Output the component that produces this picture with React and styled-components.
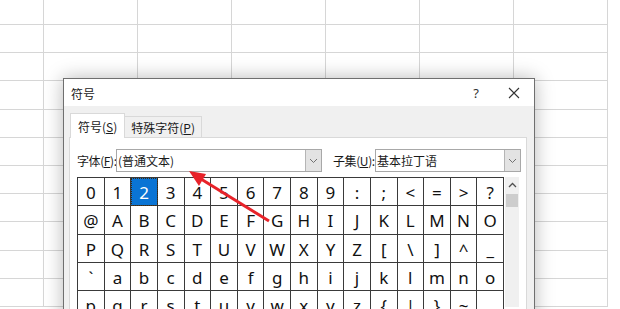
import React from "react";
import styled, { createGlobalStyle } from "styled-components";

const GlobalStyle = createGlobalStyle`
  html, body {
    margin: 0;
    padding: 0;
    background: #ffffff;
    overflow: hidden;
  }
  * { box-sizing: border-box; }
`;

const ROWS = [
  ["0", "1", "2", "3", "4", "5", "6", "7", "8", "9", ":", ";", "<", "=", ">", "?"],
  ["@", "A", "B", "C", "D", "E", "F", "G", "H", "I", "J", "K", "L", "M", "N", "O"],
  ["P", "Q", "R", "S", "T", "U", "V", "W", "X", "Y", "Z", "[", "\\", "]", "^", "_"],
  ["`", "a", "b", "c", "d", "e", "f", "g", "h", "i", "j", "k", "l", "m", "n", "o"],
  ["p", "q", "r", "s", "t", "u", "v", "w", "x", "y", "z", "{", "|", "}", "~", ""],
];

const ChevronDown = () => (
  <svg width="9" height="6" viewBox="0 0 9 6">
    <path d="M1 1 L4.5 4.5 L8 1" fill="none" stroke="#707070" strokeWidth="1" />
  </svg>
);

class App extends React.Component {
  render() {
    const sheetCells = [];
    for (let r = 0; r < 11; r++) {
      for (let c = 0; c < 7; c++) {
        sheetCells.push(<SheetCell key={r + "-" + c} />);
      }
    }
    return (
      <Page>
        <GlobalStyle />
        <Sheet>{sheetCells}</Sheet>

        <Dialog>
          <TitleBar>
            <Title>符号</Title>
            <TitleButtons>
              <Help>?</Help>
              <Close>
                <svg width="12" height="12" viewBox="0 0 12 12">
                  <path d="M1 1 L11 11 M11 1 L1 11" stroke="#333" strokeWidth="1.1" />
                </svg>
              </Close>
            </TitleButtons>
          </TitleBar>

          <DialogBody>
            <Tabs>
              <Tab $active>
                符号(<u>S</u>)
              </Tab>
              <Tab>
                特殊字符(<u>P</u>)
              </Tab>
            </Tabs>

            <Panel>
              <FieldRow>
                <Label>
                  字体(<u>F</u>):
                </Label>
                <Combo $width={206}>
                  <ComboText>(普通文本)</ComboText>
                  <DropButton>
                    <ChevronDown />
                  </DropButton>
                </Combo>
                <Label $gap={11}>
                  子集(<u>U</u>):
                </Label>
                <Combo $width={146}>
                  <ComboText>基本拉丁语</ComboText>
                  <DropButton>
                    <ChevronDown />
                  </DropButton>
                </Combo>
              </FieldRow>

              <GridRow>
                <SymbolGrid>
                  {ROWS.map((row, ri) =>
                    row.map((ch, ci) => (
                      <Symbol key={ri + "-" + ci} $selected={ch === "2"}>
                        {ch}
                      </Symbol>
                    ))
                  )}
                </SymbolGrid>
                <Scrollbar>
                  <ScrollUp>
                    <svg width="9" height="6" viewBox="0 0 9 6">
                      <path d="M1 5 L4.5 1.5 L8 5" fill="none" stroke="#505050" strokeWidth="1.3" />
                    </svg>
                  </ScrollUp>
                  <Thumb />
                </Scrollbar>
              </GridRow>
            </Panel>
          </DialogBody>
        </Dialog>

        <Arrow width="620" height="309" viewBox="0 0 620 309">
          <line x1="269" y1="221" x2="201" y2="179" stroke="#e8232a" strokeWidth="3" />
          <polygon points="189,171 206,174 199,186" fill="#e8232a" />
        </Arrow>
      </Page>
    );
  }
}

const Page = styled.div`
  position: relative;
  width: 620px;
  height: 309px;
  overflow: hidden;
  background: #ffffff;
`;
const Sheet = styled.div`
  display: grid;
  grid-template-columns: 44px repeat(6, 94px);
  grid-template-rows: 25px repeat(10, 28.2px);
`;
const SheetCell = styled.div`
  border-right: 1px solid #d6d6d6;
  border-bottom: 1px solid #d6d6d6;
`;
const Dialog = styled.div`
  position: absolute;
  left: 63px;
  top: 78px;
  width: 472px;
  height: 260px;
  background: #f0f0f0;
  border: 1px solid #6f6f6f;
  box-shadow: 0 0 18px rgba(0, 0, 0, 0.28);
  font-family: "Noto Sans CJK SC", "Noto Sans", sans-serif;
  color: #1a1a1a;
`;
const TitleBar = styled.div`
  display: flex;
  align-items: center;
  justify-content: space-between;
  height: 27px;
  background: #ffffff;
  padding: 0 14px 0 7px;
`;
const Title = styled.div`
  font-size: 12px;
  margin-top: 1px;
`;
const TitleButtons = styled.div`
  display: flex;
  align-items: center;
  gap: 29px;
`;
const Help = styled.span`
  font-family: "Noto Sans", sans-serif;
  font-size: 13px;
  color: #333;
`;
const Close = styled.span`
  display: flex;
  align-items: center;
  margin-top: 1px;
`;
const DialogBody = styled.div`
  padding: 8px 7px 0 5px;
`;
const Tabs = styled.div`
  display: flex;
  align-items: flex-end;
  height: 24px;
  position: relative;
  z-index: 1;
  margin-bottom: -1px;
`;
const Tab = styled.div`
  display: flex;
  align-items: center;
  height: ${(p) => (p.$active ? "25px" : "22px")};
  padding: 0 ${(p) => (p.$active ? "7px" : "6px")};
  margin-left: ${(p) => (p.$active ? "1px" : "-1px")};
  font-size: 12px;
  background: ${(p) => (p.$active ? "#ffffff" : "#f0f0f0")};
  border: 1px solid #d9d9d9;
  border-bottom: ${(p) => (p.$active ? "none" : "1px solid #d9d9d9")};
  u { text-decoration-thickness: 1px; }
`;
const Panel = styled.div`
  background: #ffffff;
  border: 1px solid #d9d9d9;
  height: 200px;
  padding: 11px 0 0 7px;
`;
const FieldRow = styled.div`
  display: flex;
  align-items: center;
  height: 23px;
`;
const Label = styled.div`
  font-size: 12px;
  width: ${(p) => (p.$gap ? "42px" : "39px")};
  margin-left: ${(p) => (p.$gap ? `${p.$gap}px` : "0")};
  white-space: nowrap;
  letter-spacing: -0.4px;
`;
const Combo = styled.div`
  display: flex;
  width: ${(p) => p.$width}px;
  height: 23px;
  border: 1px solid #a8a8a8;
  background: #ffffff;
`;
const ComboText = styled.div`
  flex: 1;
  font-size: 12px;
  line-height: 21px;
  padding-left: 1px;
`;
const DropButton = styled.div`
  width: 16px;
  display: flex;
  align-items: center;
  justify-content: center;
  background: #e3e3e3;
  border-left: 1px solid #b5b5b5;
`;
const GridRow = styled.div`
  display: flex;
  align-items: flex-start;
  margin-top: 5px;
`;
const SymbolGrid = styled.div`
  display: grid;
  grid-template-columns: repeat(16, 26.625px);
  grid-auto-rows: 28.3px;
  border-top: 1px solid #3a3a3a;
  border-left: 1px solid #3a3a3a;
`;
const Symbol = styled.div`
  display: flex;
  align-items: center;
  justify-content: center;
  padding-top: 2px;
  border-right: 1px solid #3a3a3a;
  border-bottom: 1px solid #3a3a3a;
  font-family: "Noto Sans", "DejaVu Sans", sans-serif;
  font-size: 17px;
  color: ${(p) => (p.$selected ? "#ffffff" : "#111111")};
  background: ${(p) => (p.$selected ? "#0a74d4" : "#ffffff")};
  outline: ${(p) => (p.$selected ? "1px dotted #3a2a10" : "none")};
  outline-offset: -1px;
`;
const Scrollbar = styled.div`
  width: 14px;
  height: 130px;
  margin-left: 1px;
  background: #f0f0f0;
  display: flex;
  flex-direction: column;
  align-items: center;
`;
const ScrollUp = styled.div`
  height: 16px;
  display: flex;
  align-items: center;
  justify-content: center;
`;
const Thumb = styled.div`
  width: 12px;
  height: 13px;
  margin-top: 1px;
  background: #cdcdcd;
`;
const Arrow = styled.svg`
  position: absolute;
  left: 0;
  top: 0;
  pointer-events: none;
`;

export default App;
